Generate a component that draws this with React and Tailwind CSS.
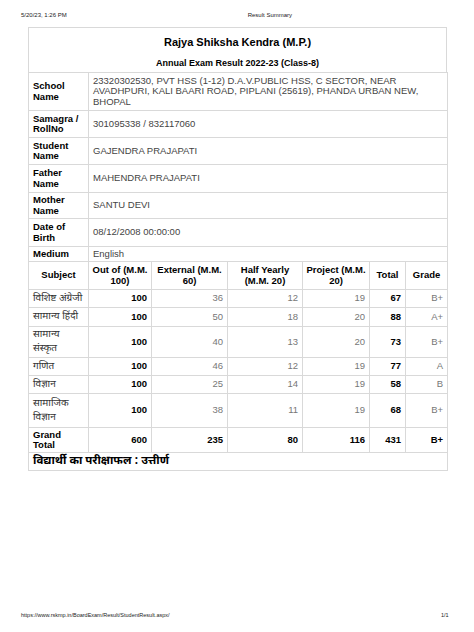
import React from "react";

const B = "border border-[#d9d9d9]";
const hi = { fontFamily: '"Noto Sans Devanagari", "Lohit Devanagari", "Noto Sans", "Mukta", sans-serif' };

const info = [
  ["School Name", "23320302530, PVT HSS (1-12) D.A.V.PUBLIC HSS, C SECTOR, NEAR AVADHPURI, KALI BAARI ROAD, PIPLANI (25619), PHANDA URBAN NEW, BHOPAL", "h-[38px]"],
  ["Samagra / RollNo", "301095338 / 832117060", "h-[27px]"],
  ["Student Name", "GAJENDRA PRAJAPATI", "h-[27px]"],
  ["Father Name", "MAHENDRA PRAJAPATI", "h-[28px]"],
  ["Mother Name", "SANTU DEVI", "h-[26px]"],
  ["Date of Birth", "08/12/2008 00:00:00", "h-[28px]"],
  ["Medium", "English", "h-[15px]"],
];

const rows = [
  ["विशिष्ट अंग्रेजी", 100, 36, 12, 19, 67, "B+", "h-[18px]"],
  ["सामान्य हिंदी", 100, 50, 18, 20, 88, "A+", "h-[19px]"],
  ["सामान्य संस्कृत", 100, 40, 13, 20, 73, "B+", "h-[31px]"],
  ["गणित", 100, 46, 12, 19, 77, "A", "h-[18px]"],
  ["विज्ञान", 100, 25, 14, 19, 58, "B", "h-[18px]"],
  ["सामाजिक विज्ञान", 100, 38, 11, 19, 68, "B+", "h-[34px]"],
];

export default function App() {
  return (
    <div className="w-[474px] h-[632px] bg-white relative" style={{ fontFamily: '"Liberation Sans", Arial, sans-serif' }}>
      <div className="flex h-[27px] items-start pt-[11px] pl-[21px] text-[6px] text-[#222]">
        <span>5/20/23, 1:26 PM</span>
        <span className="ml-[181px]">Result Summary</span>
      </div>
      <div className="ml-[28px] w-[419px] border border-[#d9d9d9] border-b-0">
        <div className="h-[44px] flex flex-col items-center text-black font-bold">
          <div className="text-[11px] leading-[13px] mt-[8px]">Rajya Shiksha Kendra (M.P.)</div>
          <div className="text-[9px] leading-[11px] mt-[9px]">Annual Exam Result 2022-23 (Class-8)</div>
        </div>
      </div>
      <table className="ml-[28px] w-[419px] table-fixed border-collapse text-[9.5px] leading-[10.5px]">
        <colgroup>
          <col className="w-[60px]" />
          <col className="w-[63px]" />
          <col className="w-[76px]" />
          <col className="w-[75px]" />
          <col className="w-[67px]" />
          <col className="w-[36px]" />
          <col className="w-[42px]" />
        </colgroup>
        <tbody>
          {info.map(([l, v, h]) => (
            <tr key={l} className={h}>
              <td className={`${B} px-[4px] py-0 font-bold text-black align-middle`}>{l}</td>
              <td colSpan={6} className={`${B} px-[4px] py-0 text-[#444] align-middle`}>{v}</td>
            </tr>
          ))}
          <tr className="h-[28px] font-bold text-black text-center">
            <td className={`${B} px-[2px]`}>Subject</td>
            <td className={`${B} px-[2px]`}>Out of (M.M. 100)</td>
            <td className={`${B} px-[2px]`}>External (M.M. 60)</td>
            <td className={`${B} px-[2px]`}>Half Yearly (M.M. 20)</td>
            <td className={`${B} px-[2px]`}>Project (M.M. 20)</td>
            <td className={`${B} px-[2px]`}>Total</td>
            <td className={`${B} px-[2px]`}>Grade</td>
          </tr>
          {rows.map(([s, o, e, hy, p, t, g, h]) => (
            <tr key={s} className={h}>
              <td className={`${B} px-[4px] text-[10px] leading-[14px] text-[#333]`} style={hi}>{s}</td>
              <td className={`${B} px-[4px] text-right font-bold text-black`}>{o}</td>
              <td className={`${B} px-[4px] text-right text-[#777]`}>{e}</td>
              <td className={`${B} px-[4px] text-right text-[#777]`}>{hy}</td>
              <td className={`${B} px-[4px] text-right text-[#777]`}>{p}</td>
              <td className={`${B} px-[4px] text-right font-bold text-black`}>{t}</td>
              <td className={`${B} px-[4px] text-right text-[#777]`}>{g}</td>
            </tr>
          ))}
          <tr className="h-[25px] font-bold text-black">
            <td className={`${B} px-[4px]`}>Grand Total</td>
            <td className={`${B} px-[4px] text-right`}>600</td>
            <td className={`${B} px-[4px] text-right`}>235</td>
            <td className={`${B} px-[4px] text-right`}>80</td>
            <td className={`${B} px-[4px] text-right`}>116</td>
            <td className={`${B} px-[4px] text-right`}>431</td>
            <td className={`${B} px-[4px] text-right`}>B+</td>
          </tr>
          <tr className="h-[18px]">
            <td colSpan={7} className={`${B} px-[4px] font-bold text-[11.5px] leading-[14px] text-black`} style={hi}>
              विद्यार्थी का परीक्षाफल : उत्तीर्ण
            </td>
          </tr>
        </tbody>
      </table>
      <div className="absolute left-[21px] top-[611px] text-[5.5px] text-[#222]">https://www.rskmp.in/BoardExam/Result/StudentResult.aspx/</div>
      <div className="absolute left-[441px] top-[611px] text-[5.5px] text-[#222]">1/1</div>
    </div>
  );
}
